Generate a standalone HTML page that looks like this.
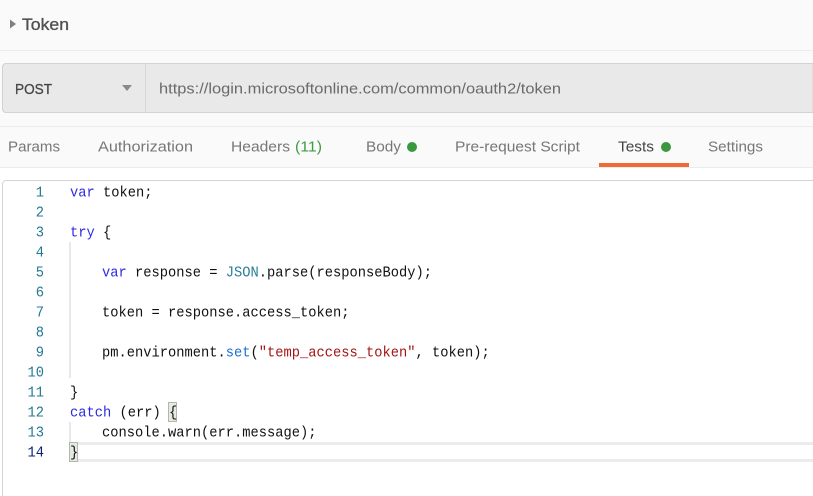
<!DOCTYPE html>
<html><head><meta charset="utf-8"><title>Token</title>
<style>
html,body{margin:0;padding:0;background:#fff;width:813px;height:496px;overflow:hidden}
svg{display:block}
.ui{font-family:"Liberation Sans",sans-serif;font-size:15px}
.code{font-family:"Liberation Mono",monospace;font-size:14.5px;fill:#111;white-space:pre}
.n{font-family:"Liberation Mono",monospace;font-size:14.5px;fill:#237893;text-anchor:end}
.k{fill:#2d2ae0}.j{fill:#267f99}.f{fill:#1f6fd0}.s{fill:#a31515}
</style></head><body>
<svg width="813" height="496" viewBox="0 0 813 496" xmlns="http://www.w3.org/2000/svg">
<rect width="813" height="168" fill="#fafafa"/>
<path d="M10 19.500l6 4.500-6 4.500z" fill="#808080"/>
<text x="22" y="30" class="ui" style="font-size:17px" fill="#505050" stroke="#505050" stroke-width=".35" textLength="47" lengthAdjust="spacingAndGlyphs">Token</text>
<rect y="50" width="813" height="1" fill="#ececec"/>
<path d="M813 63.500H6a3.500 3.500 0 0 0-3.500 3.500v42a3.500 3.500 0 0 0 3.500 3.500H813z" fill="#e9e9e9" stroke="#d2d2d2"/>
<rect x="145" y="64" width="1" height="48" fill="#d8d8d8"/>
<text x="15" y="94" class="ui" fill="#454545" stroke="#454545" stroke-width=".3" textLength="37" lengthAdjust="spacingAndGlyphs">POST</text>
<path d="M122 85h10l-5 6z" fill="#8a8a8a"/>
<text x="159" y="93.500" class="ui" fill="#6a6a6a" textLength="402" lengthAdjust="spacingAndGlyphs">https://login.microsoftonline.com/common/oauth2/token</text>
<rect y="126" width="813" height="1" fill="#ececec"/>
<rect y="167" width="813" height="1" fill="#ececec"/>
<g class="ui" fill="#777">
<text x="8" y="151.500" textLength="52" lengthAdjust="spacingAndGlyphs">Params</text>
<text x="98" y="151.500" textLength="95" lengthAdjust="spacingAndGlyphs">Authorization</text>
<text x="231" y="151.500" textLength="59" lengthAdjust="spacingAndGlyphs">Headers</text>
<text x="295" y="151.500" fill="#3f9b45" textLength="27" lengthAdjust="spacingAndGlyphs">(11)</text>
<text x="366" y="151.500" textLength="35" lengthAdjust="spacingAndGlyphs">Body</text>
<text x="455" y="151.500" textLength="125" lengthAdjust="spacingAndGlyphs">Pre-request Script</text>
<text x="618" y="151.500" fill="#444" textLength="36" lengthAdjust="spacingAndGlyphs">Tests</text>
<text x="708" y="151.500" textLength="55" lengthAdjust="spacingAndGlyphs">Settings</text>
</g>
<circle cx="412" cy="147" r="5" fill="#3b983f"/>
<circle cx="666" cy="147" r="5" fill="#3b983f"/>
<rect x="599" y="163" width="90" height="4" fill="#ef6a36"/>
<path d="M813 180.500H6a3.500 3.500 0 0 0-3.500 3.500V496" fill="none" stroke="#d4d4d4"/>
<rect x="70" y="442" width="743" height="3" fill="#ececec"/>
<rect x="70" y="459" width="743" height="3" fill="#ececec"/>
<rect x="69.500" y="242" width="1" height="136" fill="#d0d0d0"/>
<rect x="69.500" y="422" width="1" height="20" fill="#d0d0d0"/>
<rect x="168.500" y="402.500" width="8" height="19" fill="#e4ebe0" stroke="#b4b4b4"/>
<rect x="69.500" y="442.500" width="8" height="19" fill="#e4ebe0" stroke="#b4b4b4"/>
<g transform="translate(0,-.5) scale(.9483,1)">
<text x="46.400" y="197" class="n">1</text><text x="46.400" y="217" class="n">2</text><text x="46.400" y="237" class="n">3</text><text x="46.400" y="257" class="n">4</text><text x="46.400" y="277" class="n">5</text><text x="46.400" y="297" class="n">6</text><text x="46.400" y="317" class="n">7</text><text x="46.400" y="337" class="n">8</text><text x="46.400" y="357" class="n">9</text><text x="46.400" y="377" class="n">10</text><text x="46.400" y="397" class="n">11</text><text x="46.400" y="417" class="n">12</text><text x="46.400" y="437" class="n">13</text><text x="46.400" y="457" class="n" style="fill:#0b216f">14</text>
<text x="73.820" y="197" class="code" xml:space="preserve"><tspan class="k">var</tspan> token;</text>
<text x="73.820" y="237" class="code" xml:space="preserve"><tspan class="k">try</tspan> {</text>
<text x="107.560" y="277" class="code" xml:space="preserve"><tspan class="k">var</tspan> response = <tspan class="j">JSON</tspan>.parse(responseBody);</text>
<text x="107.560" y="317" class="code" xml:space="preserve">token = response.access_token;</text>
<text x="107.560" y="357" class="code" xml:space="preserve">pm.environment.<tspan class="f">set</tspan>(<tspan class="s">"temp_access_token"</tspan>, token);</text>
<text x="73.820" y="397" class="code">}</text>
<text x="73.820" y="417" class="code" xml:space="preserve"><tspan class="k">catch</tspan> (err) {</text>
<text x="107.560" y="437" class="code" xml:space="preserve">console.warn(err.message);</text>
<text x="73.820" y="457" class="code">}</text>
</g>
</svg>
</body></html>
